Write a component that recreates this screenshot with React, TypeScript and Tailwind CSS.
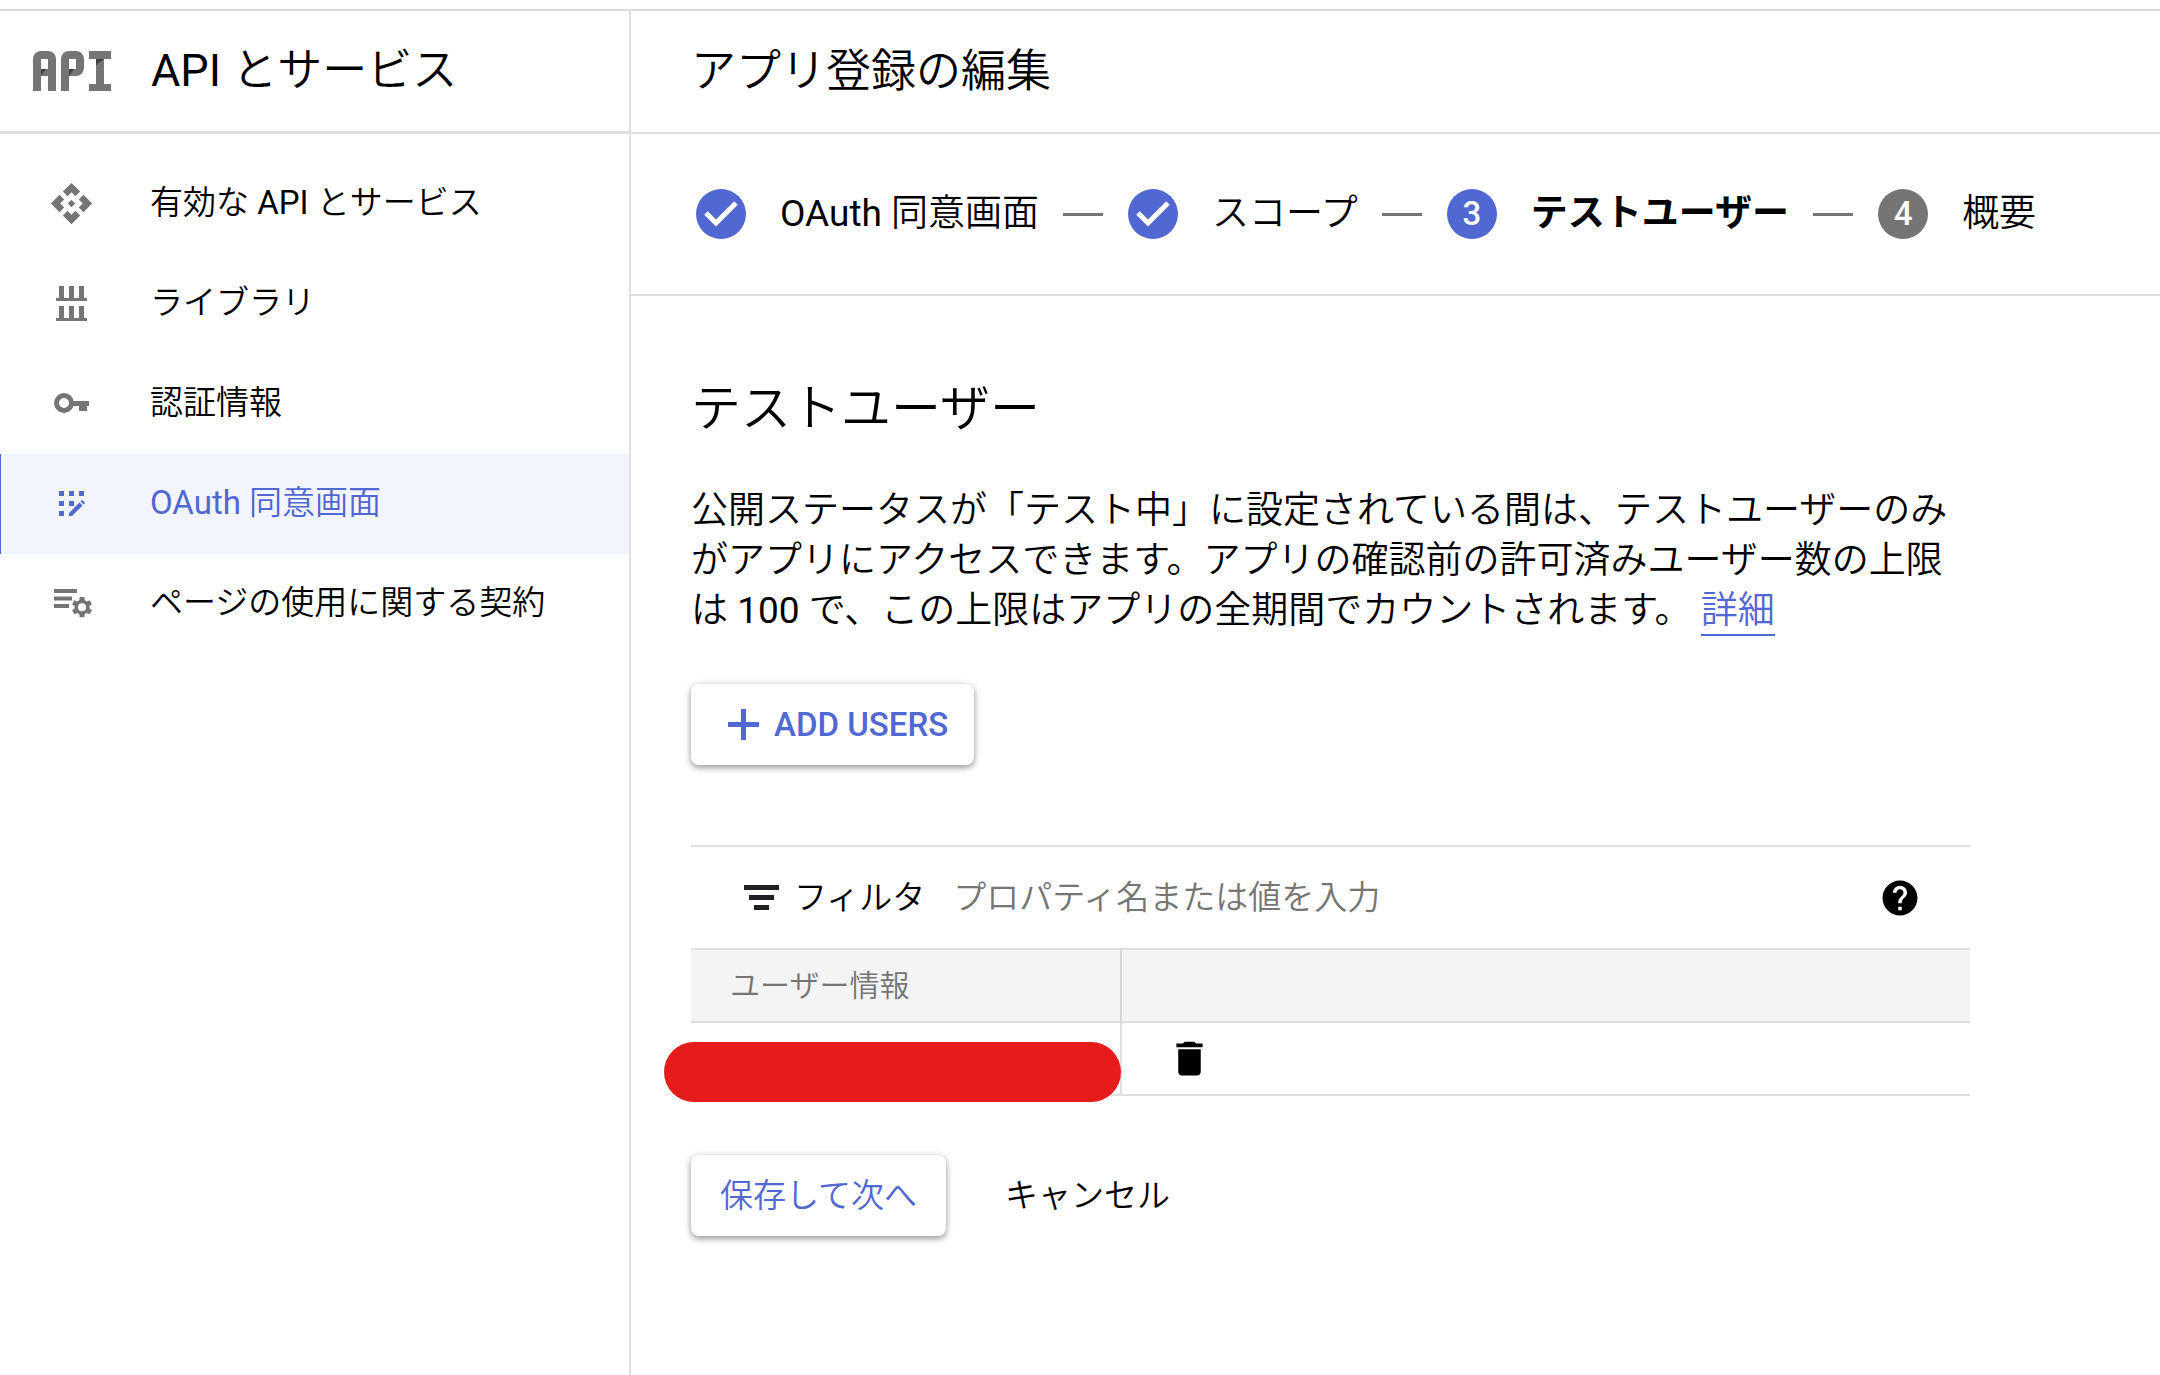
import React from "react";
import { MdApi, MdDelete, MdHelp } from "react-icons/md";

const ApiLogo = () => (
  <svg width="80" height="40" viewBox="0 0 80 40" className="shrink-0" fill="#757575">
    <path d="M0 40V8a8 8 0 0 1 8-8h7a8 8 0 0 1 8 8v32h-8V25H8v15zM8 8v10h7V8z" fillRule="evenodd" />
    <path d="M28 40V8a8 8 0 0 1 8-8h7a8 8 0 0 1 8 8v9a8 8 0 0 1-8 8h-7v15zM36 8v10h7V8z" fillRule="evenodd" />
    <path d="M56 0h22v8h-7v25h7v7H56v-7h7V8h-7z" />
    <path d="M8 18h5l-5 7zM36 18h5l-5 7zM63 8h8l-8 6z" fill="#424242" />
  </svg>
);

const LibraryIcon = () => (
  <svg width="45" height="45" viewBox="0 0 45 45" fill="currentColor">
    <path d="M10 5h5v12h5V5h5v12h5V5h5v12h3v3H7v-3h3zM10 25h5v12h5V25h5v12h5V25h5v12h3v3H7v-3h3z" />
  </svg>
);

const KeyIcon = () => (
  <svg width="45" height="45" viewBox="0 0 45 45" fill="currentColor">
    <path
      d="M15 12a10 10 0 1 1 0 20a10 10 0 1 1 0-20zM15 17a5 5 0 1 0 0 10a5 5 0 1 0 0-10z"
      fillRule="evenodd"
    />
    <path d="M24 20h16v5h-2v5h-8v-5h-6z" />
  </svg>
);

const ConsentIcon = () => (
  <svg width="45" height="45" viewBox="0 0 45 45" fill="currentColor">
    <path d="M10 10h5v5h-5zM20 10h5v5h-5zM30 10h5v5h-5zM10 20h5v5h-5zM20 20h5v5h-5zM10 30h5v5h-5z" />
    <path d="M20 32l10.500-10.500 3 3-10.500 10.500h-3zM31.500 20.500l1-1a1 1 0 0 1 1.300 0l1.700 1.700a1 1 0 0 1 0 1.300l-1 1z" />
  </svg>
);

const AgreementIcon = () => (
  <svg width="45" height="45" viewBox="0 0 45 45" fill="currentColor">
    <path d="M5 8h23v4H5zM5 15.500h18v4H5zM5 23h15v4H5z" />
    <g transform="translate(21 15) scale(1.12)">
      <path d="M17.400 11a7 7 0 0 0 0-2l2.200-1.700-2-3.500-2.600 1a8 8 0 0 0-1.800-1L12.800 1H8.700l-.4 2.800a8 8 0 0 0-1.800 1l-2.600-1-2 3.500L4.100 9a7 7 0 0 0 0 2l-2.200 1.700 2 3.500 2.600-1a8 8 0 0 0 1.800 1l.4 2.800h4.100l.4-2.800a8 8 0 0 0 1.800-1l2.600 1 2-3.500zM10.750 13.600a3.600 3.600 0 1 1 0-7.200a3.600 3.600 0 1 1 0 7.200z" />
    </g>
  </svg>
);

const FilterIcon = () => (
  <svg width="35" height="25" viewBox="0 0 35 25" fill="#202124" className="shrink-0">
    <path d="M0 0h35v5H0zM5 10h25v5H5zM10 20h15v5H10z" />
  </svg>
);

const PlusIcon = () => (
  <svg width="31" height="31" viewBox="0 0 31 31" fill="currentColor">
    <path d="M13 0h5v13h13v5H18v13h-5V18H0v-5h13z" />
  </svg>
);

const CheckIcon = () => (
  <svg width="50" height="50" viewBox="0 0 50 50" fill="none" stroke="#fff" strokeWidth="5">
    <path d="M10 24l10 10 20-20" />
  </svg>
);

const navItems = [
  { label: "有効な API とサービス", icon: <MdApi size={45} /> },
  { label: "ライブラリ", icon: <LibraryIcon /> },
  { label: "認証情報", icon: <KeyIcon /> },
  { label: "OAuth 同意画面", icon: <ConsentIcon />, active: true },
  { label: "ページの使用に関する契約", icon: <AgreementIcon /> },
];

const steps = [
  { label: "OAuth 同意画面", state: "done" },
  { label: "スコープ", state: "done" },
  { label: "テストユーザー", state: "current" },
  { label: "概要", state: "next" },
];

const raised =
  "rounded-lg bg-white text-[#5167d1] shadow-[0_3px_6px_rgba(0,0,0,0.35),0_0_8px_rgba(0,0,0,0.1)]";

const Sidebar: React.FC = () => (
  <aside className="w-[631px] shrink-0 border-r-2 border-[#e0e0e0]">
    <div className="flex h-[123px] items-center border-b-3 border-[#e0e0e0] pl-[33px]">
      <ApiLogo />
      <h2 className="pl-[38px] text-[45px] leading-[60px]">API とサービス</h2>
    </div>
    <nav className="pt-5">
      {navItems.map((item) => (
        <a
          key={item.label}
          href="#"
          className={
            item.active
              ? "flex h-[100px] items-center border-l border-[#5167d1] bg-[#f2f5fe] pb-0.5 pl-12 text-[#5167d1]"
              : "flex h-[100px] items-center border-l border-transparent pb-0.5 pl-12"
          }
        >
          <span className={item.active ? "" : "text-[#757575]"}>{item.icon}</span>
          <span className="pl-14 text-[33px] leading-[50px]">{item.label}</span>
        </a>
      ))}
    </nav>
  </aside>
);

const Stepper: React.FC = () => (
  <ol className="flex h-[162px] items-center border-b-2 border-[#e0e0e0] pl-[65px] text-[37px] leading-[50px] whitespace-nowrap">
    {steps.map((step, i) => (
      <li key={step.label} className="flex items-center">
        {i > 0 && <span className="mr-[25px] ml-6 h-[3px] w-10 bg-[#757575]" />}
        <span
          className={
            step.state === "next"
              ? "flex size-[50px] items-center justify-center rounded-full bg-[#757575] text-[33px] font-medium text-white"
              : "flex size-[50px] items-center justify-center rounded-full bg-[#5167d1] text-[33px] font-medium text-white"
          }
        >
          {step.state === "done" ? <CheckIcon /> : i + 1}
        </span>
        <span
          className={
            step.state === "current"
              ? "pl-[34px] font-[Roboto,'Noto_Sans_CJK_JP',sans-serif] font-bold"
              : "pl-[34px]"
          }
        >
          {step.label}
        </span>
      </li>
    ))}
  </ol>
);

const UserTable: React.FC = () => (
  <section className="mt-20 border-t-2 border-[#e0e0e0]">
    <div className="flex h-[101px] items-center pr-[49px] pl-[53px] text-[33px] leading-[50px]">
      <FilterIcon />
      <label htmlFor="filter" className="pl-[15px]">
        フィルタ
      </label>
      <input
        id="filter"
        type="text"
        placeholder="プロパティ名または値を入力"
        className="ml-7 min-w-0 flex-1 outline-none placeholder:text-[#757575]"
      />
      <button type="button" aria-label="ヘルプ">
        <MdHelp size={42} />
      </button>
    </div>
    <table className="w-full table-fixed border-collapse">
      <thead>
        <tr className="h-[73px] border-y-2 border-[#e0e0e0] bg-[#f4f4f4]">
          <th className="w-[430px] border-r-2 border-[#d6d6d6] pl-[39px] text-left text-[30px] leading-10 font-normal text-[#757575]">
            ユーザー情報
          </th>
          <th />
        </tr>
      </thead>
      <tbody>
        <tr className="h-[73px] border-b-2 border-[#e0e0e0]">
          <td className="relative border-r-2 border-[#e0e0e0]">
            <span className="absolute top-[19px] -right-px -left-[27px] h-[60px] rounded-full bg-[#e61b1b]" />
          </td>
          <td className="pl-[45px]">
            <button type="button" aria-label="削除" className="block">
              <MdDelete size={45} />
            </button>
          </td>
        </tr>
      </tbody>
    </table>
  </section>
);

export default function App() {
  return (
    <div className="flex min-h-screen flex-col bg-white pt-[9px] font-[Roboto,'Noto_Sans_CJK_JP_DemiLight','Noto_Sans_CJK_JP',sans-serif] text-black">
      <div className="flex flex-1 border-t-2 border-[#dadce0]">
        <Sidebar />
        <main className="min-w-0 flex-1">
          <header className="flex h-[123px] items-center border-b-2 border-[#e0e0e0] pl-[60px]">
            <h1 className="text-[45px] leading-[60px]">アプリ登録の編集</h1>
          </header>
          <Stepper />
          <div className="max-w-[1339px] pt-20 pl-[60px]">
            <h2 className="text-[50px] leading-[66px]">テストユーザー</h2>
            <p className="mt-11 text-[37px] leading-[50px]">
              公開ステータスが「テスト中」に設定されている間は、テストユーザーのみがアプリにアクセスできます。アプリの確認前の許可済みユーザー数の上限は
              100 で、この上限はアプリの全期間でカウントされます。{" "}
              <a
                href="#"
                className="inline-block border-b-2 border-[#5167d1] leading-[46px] text-[#5167d1]"
              >
                詳細
              </a>
            </p>
            <button
              type="button"
              className={`mt-12 flex h-[81px] items-center gap-[15px] pr-[26px] pl-[37px] text-[33px] font-medium ${raised}`}
            >
              <PlusIcon />
              ADD USERS
            </button>
            <UserTable />
            <div className="mt-[59px] flex items-center gap-[59px] text-[33px]">
              <button type="button" className={`h-[81px] px-[29px] ${raised}`}>
                保存して次へ
              </button>
              <button type="button">キャンセル</button>
            </div>
          </div>
        </main>
      </div>
    </div>
  );
}
